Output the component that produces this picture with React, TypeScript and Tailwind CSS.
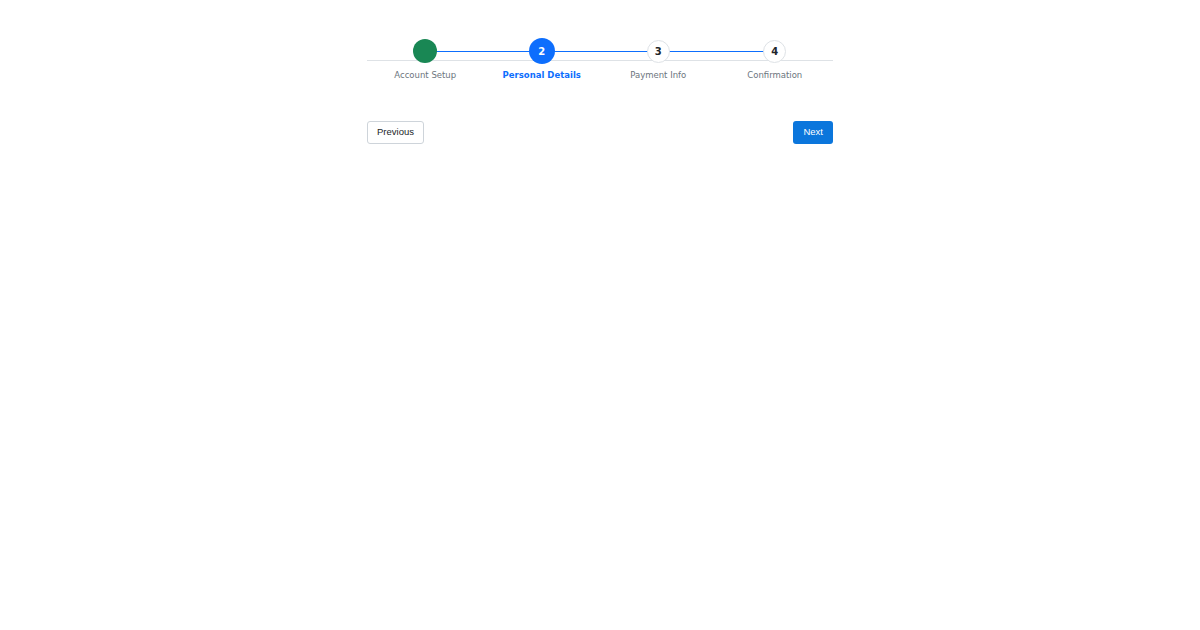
const steps = [
  { label: 'Account Setup', state: 'done' },
  { label: 'Personal Details', state: 'active' },
  { label: 'Payment Info', state: 'todo' },
  { label: 'Confirmation', state: 'todo' },
] as const

export default function App() {
  return (
    <div className="min-h-[630px] bg-white pt-[38px] font-['DejaVu_Sans',sans-serif]">
      <div className="mx-auto w-[466px]">
        <div className="relative flex">
          <div className="absolute left-0 right-0 top-[22px] h-px bg-[#dee2e6]" />
          {steps.map((step, i) => (
            <div key={step.label} className="relative flex flex-1 flex-col items-center">
              {i < steps.length - 1 ? (
                <div className="absolute left-1/2 top-[13px] h-px w-full bg-[#0d6efd]" />
              ) : null}
              <div className="relative z-10 flex h-[26px] items-center">
                {step.state === 'done' ? (
                  <div className="h-6 w-6 rounded-full bg-[#198754]" />
                ) : step.state === 'active' ? (
                  <div className="flex h-[26px] w-[26px] items-center justify-center rounded-full bg-[#0d6efd] text-[10px] font-bold text-white">
                    {i + 1}
                  </div>
                ) : (
                  <div className="flex h-[23px] w-[23px] items-center justify-center rounded-full border border-[#dee2e6] bg-white text-[10px] font-bold text-[#212529]">
                    {i + 1}
                  </div>
                )}
              </div>
              <div
                className={
                  step.state === 'active'
                    ? 'mt-[6px] text-[8.5px] font-bold leading-[11px] text-[#0d6efd]'
                    : 'mt-[6px] text-[8.5px] leading-[11px] text-[#6c757d]'
                }
              >
                {step.label}
              </div>
            </div>
          ))}
        </div>

        <div className="mt-[40px] flex items-center justify-between font-['Liberation_Sans',Arial,sans-serif]">
          <button
            type="button"
            className="h-[23px] rounded-[3px] border border-[#ced4da] bg-white px-[9px] text-[9.5px] text-[#212529]"
          >
            Previous
          </button>
          <button
            type="button"
            className="h-[23px] rounded-[3px] bg-[#0b76dc] px-[10px] text-[9.5px] text-white"
          >
            Next
          </button>
        </div>
      </div>
    </div>
  )
}
